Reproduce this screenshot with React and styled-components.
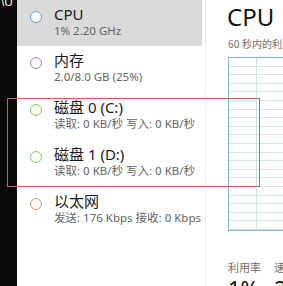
import React from "react";
import styled, { createGlobalStyle } from "styled-components";

const GlobalStyle = createGlobalStyle`
  html, body {
    margin: 0;
    padding: 0;
    background: #ffffff;
    overflow: hidden;
  }
  body {
    font-family: "Noto Sans", "Noto Sans CJK SC", sans-serif;
  }
`;

const items = [
  { name: "CPU", detail: "1% 2.20 GHz", stroke: "#6f9fd2", fill: "#f5f9fe", selected: true },
  { name: "内存", detail: "2.0/8.0 GB (25%)", stroke: "#a585bf", fill: "#fbf8fd" },
  { name: "磁盘 0 (C:)", detail: "读取: 0 KB/秒 写入: 0 KB/秒", stroke: "#93c866", fill: "#f8fcf3" },
  { name: "磁盘 1 (D:)", detail: "读取: 0 KB/秒 写入: 0 KB/秒", stroke: "#93c866", fill: "#f8fcf3" },
  { name: "以太网", detail: "发送: 176 Kbps 接收: 0 Kbps", stroke: "#d49b76", fill: "#fdf8f4" },
];

export default function App() {
  return (
    <>
      <GlobalStyle />
      <Window>
        <Strip>
          <StripText>\U</StripText>
        </Strip>
        <Sidebar>
          {items.map((it) => (
            <Item key={it.name} $selected={it.selected}>
              <Dot $stroke={it.stroke} $fill={it.fill} />
              <ItemText>
                <ItemName>{it.name}</ItemName>
                <ItemDetail>{it.detail}</ItemDetail>
              </ItemText>
            </Item>
          ))}
        </Sidebar>
        <Divider />
        <Panel>
          <PanelTitle>CPU</PanelTitle>
          <Caption>60 秒内的利用率 %</Caption>
          <Graph />
          <Stats>
            <Stat>
              <StatLabel>利用率</StatLabel>
              <StatValue>1%</StatValue>
            </Stat>
            <Stat>
              <StatLabel>速度</StatLabel>
              <StatValue>2.20 GHz</StatValue>
            </Stat>
          </Stats>
        </Panel>
        <Highlight />
      </Window>
    </>
  );
}

const Window = styled.div`
  position: relative;
  display: flex;
  width: 283px;
  height: 286px;
  overflow: hidden;
`;

const Strip = styled.div`
  width: 17px;
  flex-shrink: 0;
  background: #0a0a0a;
  overflow: hidden;
`;

const StripText = styled.div`
  color: #f2f2f2;
  font-family: "Liberation Sans", sans-serif;
  font-size: 12px;
  line-height: 12px;
  margin-top: -4px;
  margin-left: 1px;
  white-space: nowrap;
`;

const Sidebar = styled.div`
  width: 185px;
  flex-shrink: 0;
  display: flex;
  flex-direction: column;
`;

const Item = styled.div`
  height: 47px;
  box-sizing: border-box;
  display: flex;
  align-items: flex-start;
  gap: 12px;
  padding: 5px 0 0 13px;
  background: ${(p) => (p.$selected ? "#dadada" : "transparent")};
  &:first-child {
    height: 46px;
  }
`;

const Dot = styled.div`
  width: 10px;
  height: 10px;
  margin-top: 5.5px;
  border-radius: 50%;
  border: 1.6px solid ${(p) => p.$stroke};
  background: ${(p) => p.$fill};
  flex-shrink: 0;
`;

const ItemText = styled.div`
  display: flex;
  flex-direction: column;
  white-space: nowrap;
`;

const ItemName = styled.div`
  font-size: 15px;
  line-height: 19px;
  color: #1b1b1b;
`;

const ItemDetail = styled.div`
  font-size: 11.5px;
  line-height: 14px;
  color: #646464;
`;

const Divider = styled.div`
  width: 1px;
  margin-left: 3px;
  background: #ececec;
  flex-shrink: 0;
`;

const Panel = styled.div`
  flex: 1;
  display: flex;
  flex-direction: column;
  padding-left: 22px;
  min-width: 0;
  white-space: nowrap;
  overflow: hidden;
`;

const PanelTitle = styled.div`
  font-size: 24px;
  line-height: 30px;
  margin-top: 2px;
  color: #111;
  margin-left: -1px;
`;

const Caption = styled.div`
  font-size: 10px;
  line-height: 12px;
  margin-top: 6px;
  color: #6e6e6e;
`;

const Graph = styled.div`
  margin-top: 7px;
  height: 174px;
  flex-shrink: 0;
  width: 120px;
  box-sizing: border-box;
  border: 1px solid #7fb9c1;
  border-right: none;
  background-color: #ffffff;
  background-image:
    linear-gradient(to right, transparent 27px, #cfe2e5 27px, #cfe2e5 28px, transparent 28px),
    repeating-linear-gradient(to bottom, transparent 0, transparent 7.6px, #d4e6e9 7.6px, #d4e6e9 8.6px);
  background-size: 28px 100%, 100% 100%;
  background-repeat: repeat-x, no-repeat;
`;

const Stats = styled.div`
  display: flex;
  gap: 13px;
  margin-top: 30px;
`;

const Stat = styled.div`
  display: flex;
  flex-direction: column;
  flex-shrink: 0;
`;

const StatLabel = styled.div`
  font-size: 11px;
  line-height: 14px;
  color: #707070;
`;

const StatValue = styled.div`
  font-size: 22px;
  line-height: 26px;
  color: #111;
`;

const Highlight = styled.div`
  position: absolute;
  left: 7px;
  top: 98px;
  width: 253px;
  height: 89px;
  box-sizing: border-box;
  border: 1px solid #c4615c;
  pointer-events: none;
`;
